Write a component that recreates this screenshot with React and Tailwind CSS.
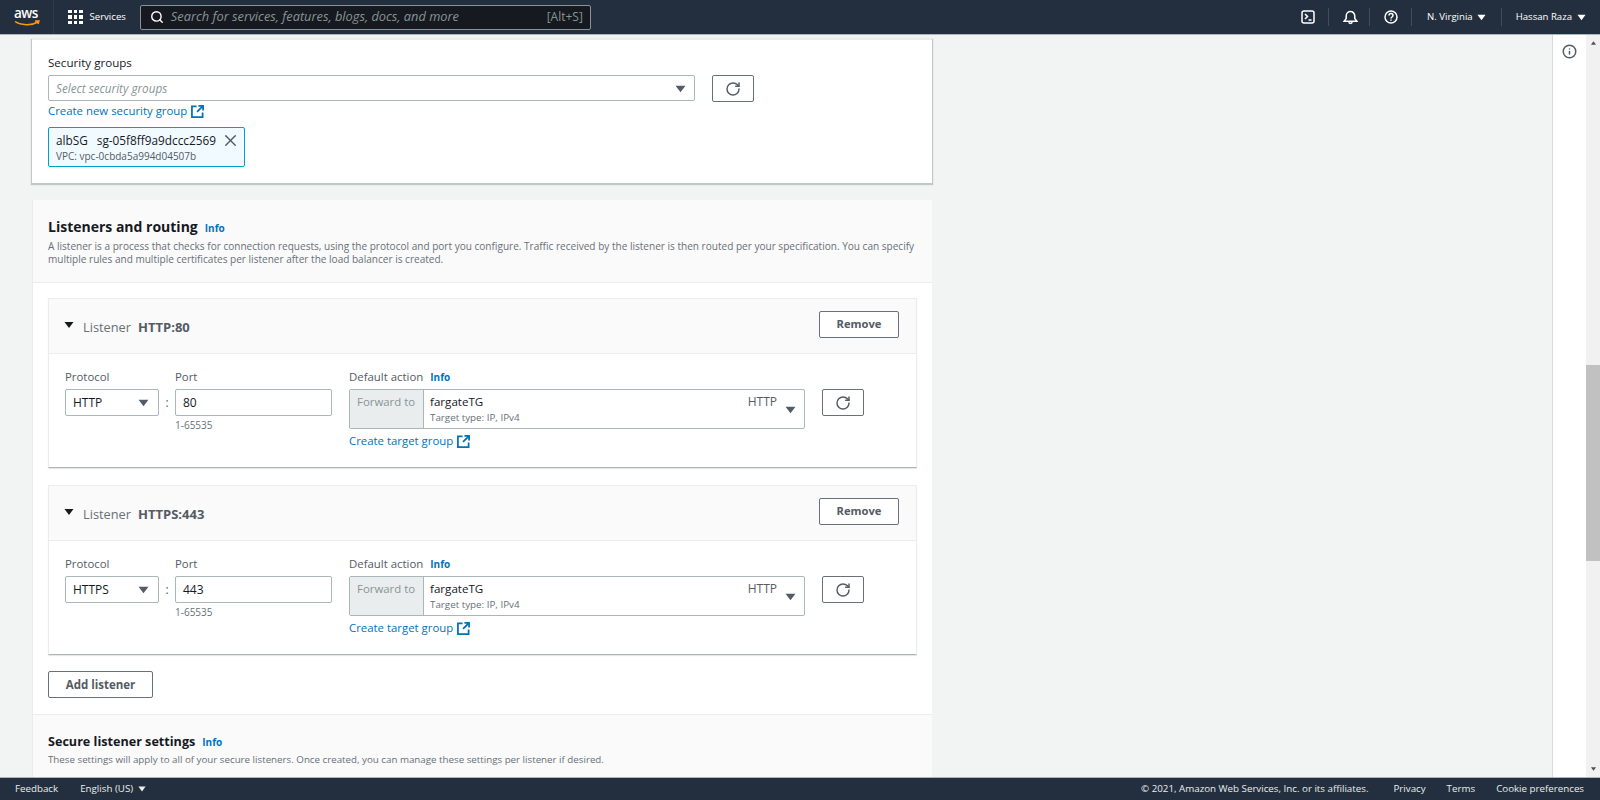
import React from 'react';
import { Search, X, RotateCw, Info as InfoIcon } from 'lucide-react';

const Caret = ({ className = '' }) => (
  <svg viewBox="0 0 10 7" className={className} fill="currentColor"><path d="M0.5 0.5h9L5 6.5z" /></svg>
);

const Info = ({ className = '' }) => (
  <span className={`text-[10px] font-bold text-[#0073bb] ${className}`}>Info</span>
);

const NewTab = () => (
  <svg viewBox="0 0 14 14" className="w-[13px] h-[13px] ml-[4px]" fill="none" stroke="#0073bb" strokeWidth="1.9">
    <path d="M6 1.5H1v11.5h11.5V8" />
    <path d="M8 1h5v5M13 1L6.5 7.5" />
  </svg>
);

const Refresh = ({ className = '' }) => (
  <button className={`w-[42px] h-[27px] flex items-center justify-center border border-[#687078] rounded-[2px] bg-white text-[#545b64] ${className}`}>
    <RotateCw size={16} strokeWidth={2.2} />
  </button>
);

function Listener({ title, protocol, port, className = '' }) {
  return (
    <div className={`border border-[#eaeded] border-b-[#aab7b8] rounded-[1px] bg-white shadow-[0_1px_1px_rgba(0,28,36,0.12)] ${className}`}>
      <div className="h-[55px] bg-[#fafafa] border-b border-[#eaeded] flex items-center pl-[15px] pr-[17px]">
        <Caret className="w-[10px] h-[8px] text-[#16191f] -mt-[3px] mr-[9px]" />
        <span className="text-[12.8px] mt-[3px] text-[#687078] mr-[7px]">Listener</span>
        <span className="text-[13px] mt-[3px] font-bold text-[#545b64]">{title}</span>
        <button className="ml-auto -mt-[3px] w-[80px] h-[27px] border border-[#687078] rounded-[2px] bg-white text-[11.2px] font-bold text-[#545b64]">Remove</button>
      </div>
      <div className="h-[113px] flex pl-[16px] pt-[14px]">
        <div className="w-[94px]">
          <div className="h-[21px] text-[11.4px] leading-[18px] text-[#545b64]">Protocol</div>
          <div className="h-[27px] border border-[#aab7b8] rounded-[2px] flex items-center pl-[7px] pr-[9px] text-[12px] text-[#16191f]">
            {protocol}
            <Caret className="ml-auto w-[11px] h-[8px] text-[#545b64]" />
          </div>
        </div>
        <div className="w-[16px] pt-[21px] h-[48px] flex items-center justify-center text-[12px] text-[#545b64]">:</div>
        <div className="w-[157px]">
          <div className="h-[21px] text-[11.4px] leading-[18px] text-[#545b64]">Port</div>
          <div className="h-[27px] border border-[#aab7b8] rounded-[2px] flex items-center pl-[7px] text-[12px] text-[#16191f]">{port}</div>
          <div className="mt-[1px] text-[10px] leading-[16px] text-[#687078]">1-65535</div>
        </div>
        <div className="w-[456px] ml-[17px]">
          <div className="h-[21px] text-[11.4px] leading-[18px] text-[#545b64] flex items-baseline">
            Default action<Info className="ml-[7px]" />
          </div>
          <div className="h-[40px] border border-[#aab7b8] rounded-[2px] flex">
            <div className="w-[74px] bg-[#eaeded] border-r border-[#aab7b8] pl-[7px] pt-[3px] text-[11.4px] text-[#879596]">Forward to</div>
            <div className="flex-1 pl-[6px] pt-[4px] flex">
              <div>
                <div className="text-[11.6px] leading-[16px] text-[#16191f]">fargateTG</div>
                <div className="text-[9.8px] leading-[15px] text-[#687078]">Target type: IP, IPv4</div>
              </div>
              <div className="ml-auto text-[12px] leading-[16px] text-[#545b64]">HTTP</div>
              <Caret className="w-[11px] h-[8px] mt-[12px] ml-[8px] mr-[8px] text-[#545b64]" />
            </div>
          </div>
          <div className="mt-[3px] flex items-center text-[11.4px] leading-[18px] text-[#0073bb]">Create target group<NewTab /></div>
        </div>
        <Refresh className="ml-[17px] mt-[21px]" />
      </div>
    </div>
  );
}

export default function App() {
  return (
    <div className="h-screen w-screen overflow-hidden flex flex-col bg-[#f2f3f3] font-['Open_Sans',sans-serif]">
      <header className="h-[34px] shrink-0 bg-[#232f3e] flex items-center text-white">
        <div className="w-[54px] pl-[14px] h-full border-r border-[#2f3b4a]">
          <span className="block text-[13.5px] font-semibold leading-[14px] pt-[6px] tracking-[-0.5px]">aws</span>
          <svg viewBox="0 0 26 8" className="w-[26px] h-[8px] text-[#f90]" fill="none" stroke="currentColor" strokeWidth="1.5"><path d="M1 1.5c6 4 16 4.5 23 .5M21 1h4l-1 3" /></svg>
        </div>
        <div className="grid grid-cols-3 gap-[2px] ml-[14px]">
          {[...Array(9)].map((_, i) => <span key={i} className="w-[3.5px] h-[3.5px] bg-white" />)}
        </div>
        <span className="ml-[7px] text-[9.6px] font-medium">Services</span>
        <div className="ml-[14px] w-[451px] h-[25px] bg-[#16191f] border border-[#879596] rounded-[2px] flex items-center pl-[9px] pr-[7px]">
          <Search size={14} strokeWidth={2.4} />
          <span className="ml-[7px] text-[12.8px] italic text-[#879596]">Search for services, features, blogs, docs, and more</span>
          <span className="ml-auto text-[12px] text-[#879596]">[Alt+S]</span>
        </div>
        <div className="ml-auto flex items-center h-full text-[9.6px] font-medium pr-[14px]">
          <svg viewBox="0 0 14 14" className="w-[14px] h-[14px]" fill="none" stroke="currentColor" strokeWidth="1.5"><rect x="1" y="1" width="12" height="12" rx="2" /><path d="M4 4l2.5 2.5L4 9M7.5 10H10.5" /></svg>
          <span className="w-px h-[18px] bg-[#414d5c] ml-[13px] mr-[14px]" />
          <svg viewBox="0 0 14 14" className="w-[15px] h-[15px]" fill="none" stroke="currentColor" strokeWidth="1.4"><path d="M1 10.5h12L11 8V5.5a4 4 0 00-8 0V8zM5.5 11a1.5 1.5 0 003 0" /></svg>
          <span className="w-px h-[18px] bg-[#414d5c] ml-[11px] mr-[14px]" />
          <svg viewBox="0 0 14 14" className="w-[14px] h-[14px]" fill="none" stroke="currentColor" strokeWidth="1.5"><circle cx="7" cy="7" r="6" /><path d="M5 5.5a2 2 0 114 0C9 7 7 7 7 8.5M7 9.6v1.2" /></svg>
          <span className="w-px h-[18px] bg-[#414d5c] ml-[13px] mr-[15px]" />
          N. Virginia<Caret className="w-[9px] h-[7px] ml-[4px]" />
          <span className="w-px h-[18px] bg-[#414d5c] ml-[15px] mr-[14px]" />
          Hassan Raza<Caret className="w-[9px] h-[7px] ml-[5px]" />
        </div>
      </header>

      <div className="flex-1 min-h-0 flex border-t border-[#aab7b8]">
        <main className="flex-1 min-w-0 pl-[32px] pt-[4px]">
          <section className="w-[900px] h-[144px] bg-white border-t border-[#eaeded] shadow-[0_1px_1px_1px_rgba(0,28,36,0.2)] pl-[16px] pt-[14px]">
            <div className="text-[11.6px] leading-[18px] text-[#16191f]">Security groups</div>
            <div className="flex mt-[3px]">
              <div className="w-[647px] h-[26px] border border-[#aab7b8] rounded-[2px] flex items-center pl-[7px] pr-[8px] pt-[1px] text-[11.7px] italic text-[#879596]">
                Select security groups
                <Caret className="ml-auto w-[11px] h-[8px] text-[#545b64]" />
              </div>
              <Refresh className="ml-[17px]" />
            </div>
            <div className="flex items-center text-[11.4px] leading-[18px] text-[#0073bb]">Create new security group<NewTab /></div>
            <div className="mt-[7px] w-[197px] h-[40px] bg-[#f1faff] border border-[#00a1c9] rounded-[2px] pl-[7px] pt-[3px] relative">
              <div className="text-[11.8px] leading-[18px] text-[#16191f]">albSG<span className="ml-[9px]">sg-05f8ff9a9dccc2569</span></div>
              <div className="text-[10px] leading-[14px] text-[#545b64]">VPC: vpc-0cbda5a994d04507b</div>
              <X size={19} strokeWidth={1.8} className="absolute right-[4px] top-[3px] text-[#545b64]" />
            </div>
          </section>

          <section className="mt-[17px] w-[900px] bg-white border-l border-[#eaeded]">
            <div className="h-[83px] bg-[#fafafa] border-b border-[#eaeded] pl-[15px] pt-[16px]">
              <div className="flex items-baseline">
                <h2 className="text-[14px] leading-[22px] font-bold text-[#16191f]">Listeners and routing</h2>
                <Info className="ml-[7px]" />
              </div>
              <p className="w-[872px] text-[10.05px] leading-[13px] text-[#687078] mt-[2px]">
                A listener is a process that checks for connection requests, using the protocol and port you configure. Traffic received by the listener is then routed per your specification. You can specify multiple rules and multiple certificates per listener after the load balancer is created.
              </p>
            </div>
            <div className="pl-[15px] pr-[15px] pt-[15px]">
              <Listener title="HTTP:80" protocol="HTTP" port="80" />
              <Listener title="HTTPS:443" protocol="HTTPS" port="443" className="mt-[17px]" />
              <button className="mt-[16px] w-[105px] h-[27px] border border-[#687078] rounded-[2px] bg-white text-[11.5px] font-bold text-[#545b64] block">Add listener</button>
            </div>
            <div className="mt-[16px] h-[80px] bg-[#fafafa] border-t border-[#eaeded] pl-[15px] pt-[17px]">
              <div className="flex items-baseline">
                <h2 className="text-[12.6px] leading-[20px] font-bold text-[#16191f]">Secure listener settings</h2>
                <Info className="ml-[7px]" />
              </div>
              <p className="text-[9.75px] leading-[16px] text-[#687078]">These settings will apply to all of your secure listeners. Once created, you can manage these settings per listener if desired.</p>
            </div>
          </section>
        </main>

        <aside className="w-[34px] shrink-0 bg-white border-l border-[#d5dbdb] flex justify-center pt-[9px] text-[#545b64]">
          <InfoIcon size={15} strokeWidth={2.4} />
        </aside>

        <div className="w-[14px] shrink-0 bg-[#f1f1f1] flex flex-col items-center">
          <Caret className="w-[7px] h-[4px] text-[#505050] rotate-180 mt-[6px]" />
          <div className="w-full h-[196px] bg-[#c1c1c1] mt-[320px]" />
          <Caret className="w-[7px] h-[4px] text-[#505050] mt-auto mb-[6px]" />
        </div>
      </div>

      <footer className="h-[23px] shrink-0 bg-[#232f3e] border-t border-[#aab7b8] flex items-center pl-[15px] pr-[16px] text-[9.75px] text-[#eaeded]">
        Feedback
        <span className="ml-[22px]">English (US)</span>
        <Caret className="w-[8px] h-[6px] ml-[5px]" />
        <span className="ml-auto">© 2021, Amazon Web Services, Inc. or its affiliates.</span>
        <span className="ml-[25px]">Privacy</span>
        <span className="ml-[21px]">Terms</span>
        <span className="ml-[21px]">Cookie preferences</span>
      </footer>
    </div>
  );
}
